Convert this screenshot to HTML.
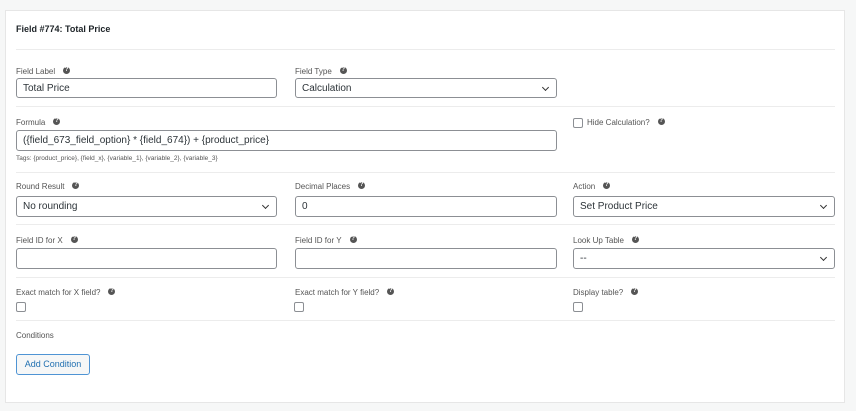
<!DOCTYPE html>
<html><head><style>
body{margin:0;width:856px;height:411px;background:#f6f7f7;font-family:"Liberation Sans",sans-serif;position:relative;overflow:hidden}
.panel{position:absolute;left:5px;top:10px;width:840px;height:393px;background:#fff;border:1px solid #e6e6e6;box-sizing:border-box}
.a{position:absolute}
.lbl{position:absolute;font-size:8px;color:#555;white-space:nowrap;line-height:10px}
.q{display:inline-block;width:7px;height:7px;border-radius:50%;background:#555;color:#fff;font-size:6px;line-height:7px;text-align:center;margin-left:8px;font-weight:bold;vertical-align:middle;position:relative;top:-1px}
.hr{position:absolute;left:16px;width:819px;height:1px;background:#ececec}
.in{position:absolute;height:20px;border:1px solid #8c8f94;border-radius:3px;box-sizing:border-box;font-size:10px;color:#2c3338;line-height:20px;padding-left:6px;background:#fff}
.sel::after{content:"";position:absolute;right:8px;top:6px;width:4px;height:4px;border-right:1.2px solid #333;border-bottom:1.2px solid #333;transform:rotate(45deg)}
.cb{position:absolute;width:10px;height:10px;border:1px solid #8c8f94;border-radius:2px;box-sizing:border-box}
</style></head><body>
<div class="panel"></div>
<div class="a" style="left:16px;top:24px;font-size:9px;font-weight:bold;color:#1d2327">Field #774: Total Price</div>
<div class="hr" style="top:49px"></div>

<div class="lbl" style="left:16px;top:67px">Field Label<span class="q">?</span></div>
<div class="in" style="left:16px;top:78px;width:261px">Total Price</div>
<div class="lbl" style="left:295px;top:67px">Field Type<span class="q">?</span></div>
<div class="in sel" style="left:295px;top:78px;width:262px">Calculation</div>
<div class="hr" style="top:106px"></div>

<div class="lbl" style="left:16px;top:118px">Formula<span class="q">?</span></div>
<div class="in" style="left:16px;top:130px;width:541px;height:21px">({field_673_field_option} * {field_674}) + {product_price}</div>
<div class="lbl" style="left:16px;top:154px;font-size:6.5px">Tags: {product_price}, {field_x}, {variable_1}, {variable_2}, {variable_3}</div>
<div class="cb" style="left:573px;top:118px"></div>
<div class="lbl" style="left:587px;top:118px">Hide Calculation?<span class="q">?</span></div>
<div class="hr" style="top:172px"></div>

<div class="lbl" style="left:16px;top:182px">Round Result<span class="q">?</span></div>
<div class="in sel" style="left:16px;top:196px;width:261px;height:21px">No rounding</div>
<div class="lbl" style="left:295px;top:182px">Decimal Places<span class="q">?</span></div>
<div class="in" style="left:295px;top:196px;width:262px;height:21px">0</div>
<div class="lbl" style="left:573px;top:182px">Action<span class="q">?</span></div>
<div class="in sel" style="left:573px;top:196px;width:262px;height:21px">Set Product Price</div>
<div class="hr" style="top:224px"></div>

<div class="lbl" style="left:16px;top:236px">Field ID for X<span class="q">?</span></div>
<div class="in" style="left:16px;top:248px;width:261px;height:21px"></div>
<div class="lbl" style="left:295px;top:236px">Field ID for Y<span class="q">?</span></div>
<div class="in" style="left:295px;top:248px;width:262px;height:21px"></div>
<div class="lbl" style="left:573px;top:236px">Look Up Table<span class="q">?</span></div>
<div class="in sel" style="left:573px;top:248px;width:262px;height:21px">--</div>
<div class="hr" style="top:277px"></div>

<div class="lbl" style="left:16px;top:288px">Exact match for X field?<span class="q">?</span></div>
<div class="cb" style="left:16px;top:302px"></div>
<div class="lbl" style="left:295px;top:288px">Exact match for Y field?<span class="q">?</span></div>
<div class="cb" style="left:294px;top:302px"></div>
<div class="lbl" style="left:573px;top:288px">Display table?<span class="q">?</span></div>
<div class="cb" style="left:573px;top:302px"></div>
<div class="hr" style="top:320px"></div>

<div class="lbl" style="left:16px;top:331px">Conditions</div>
<div class="a" style="left:16px;top:354px;width:74px;height:21px;border:1px solid #4f94d4;border-radius:3px;box-sizing:border-box;background:#f6f7f7;font-size:9px;color:#2271b1;text-align:center;line-height:19px">Add Condition</div>
</body></html>
